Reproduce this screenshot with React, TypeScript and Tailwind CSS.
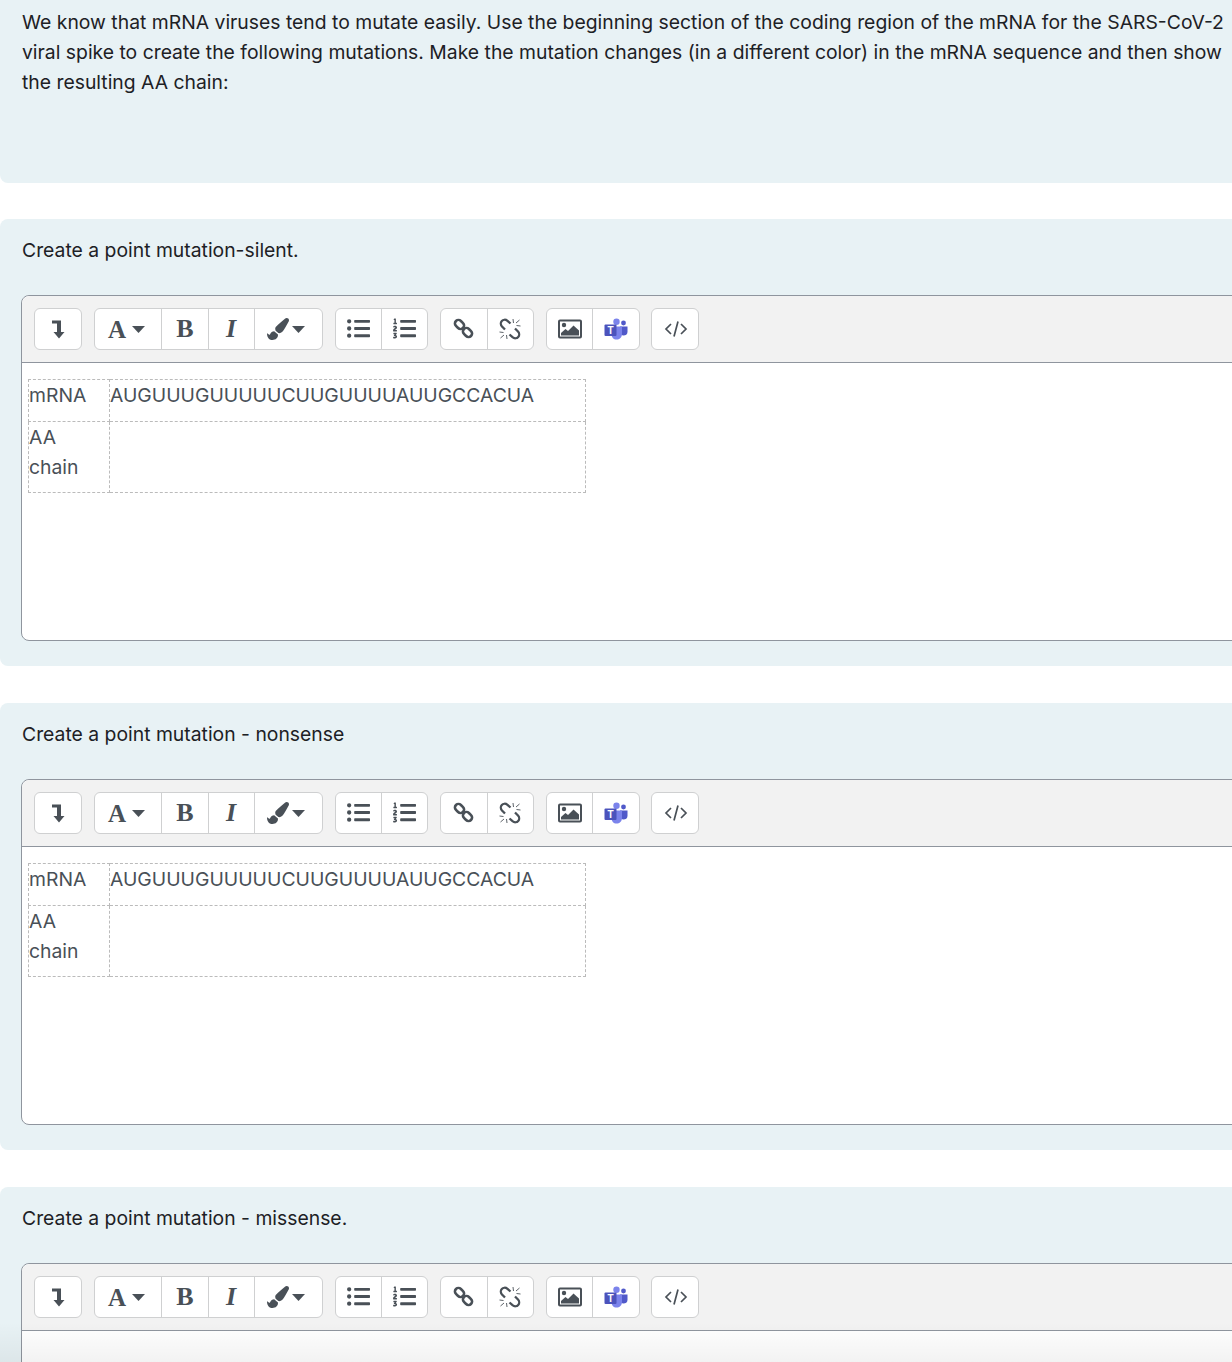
import { FaListOl, FaListUl, FaPaintBrush } from 'react-icons/fa';

const SEQUENCE = 'AUGUUUGUUUUUCUUGUUUUAUUGCCACUA';

function Btn({ width, last, children }: { width: string; last?: boolean; children: React.ReactNode }) {
  return (
    <div className={`${width} h-full flex items-center justify-center text-[#495057] ${last ? '' : 'border-r border-[#cfd0d1]'}`}>
      {children}
    </div>
  );
}

function Group({ children }: { children: React.ReactNode }) {
  return <div className="flex h-[42px] bg-white border border-[#cfd0d1] rounded-[6px]">{children}</div>;
}

function Caret() {
  return (
    <svg width="13" height="7" viewBox="0 0 13 7" className="shrink-0">
      <path d="M0 0 H13 L6.5 7 Z" fill="#495057" />
    </svg>
  );
}

function LevelDownIcon() {
  return (
    <svg width="14" height="19" viewBox="0 0 14 19">
      <path d="M1 0.5 H10 V12 H13.5 L8 18.5 L2.5 12 H6 V3.5 H1 Z" fill="#495057" />
    </svg>
  );
}

function LinkIcon() {
  return (
    <svg width="22" height="22" viewBox="0 0 22 22" fill="none" stroke="#495057" strokeWidth="2.6">
      <rect x="1.5" y="3" width="10" height="7" rx="3.5" transform="rotate(45 6.5 6.5)" />
      <rect x="9.5" y="11" width="10" height="7" rx="3.5" transform="rotate(45 14.5 14.5)" />
    </svg>
  );
}

function UnlinkIcon() {
  return (
    <svg width="22" height="22" viewBox="0 0 22 22" fill="none" stroke="#495057">
      <path d="M11.5 5.5 L8.5 2.8 C6.5 1.2 4 1.6 2.8 3 C1.4 4.5 1.6 7 3 8.5 L6 11.5" strokeWidth="2.3" />
      <path d="M10.5 16.5 L13.5 19.2 C15.5 20.8 18 20.4 19.2 19 C20.6 17.5 20.4 15 19 13.5 L16 10.5" strokeWidth="2.3" />
      <path d="M14 1 L14.5 5 M20.5 2 L17 5 M21.5 8 L17.5 7.5 M0.5 14 L4.5 14.5 M1.5 20 L5 17 M8 21 L7.5 17" strokeWidth="0.9" />
    </svg>
  );
}

function ImageIcon() {
  return (
    <svg width="24" height="20" viewBox="0 0 24 20">
      <rect x="1" y="1.5" width="22" height="17" rx="1" fill="#fff" stroke="#495057" strokeWidth="2" />
      <circle cx="6" cy="6" r="2.2" fill="#495057" />
      <path d="M3 16.5 L3 14 L7.5 10 L10 12 L15.5 6.5 L21 11.5 L21 16.5 Z" fill="#495057" />
    </svg>
  );
}

function TeamsIcon() {
  return (
    <svg width="24" height="22" viewBox="0 0 24 22">
      <circle cx="19.5" cy="5" r="2.4" fill="#5059c9" />
      <path d="M16 8.5 H23.5 V14 C23.5 16.5 21.5 17.5 19.5 17.5 C17.5 17.5 16 16 16 14 Z" fill="#5059c9" />
      <circle cx="12.5" cy="3.8" r="3.2" fill="#7b83eb" />
      <path d="M7.5 8.5 H18 V16 C18 19.5 15.5 21.5 12.5 21.5 C9.5 21.5 7.5 19.5 7.5 16 Z" fill="#7b83eb" />
      <rect x="0.5" y="6.5" width="12" height="11.5" rx="1" fill="#4b53bc" />
      <text x="6.5" y="16" textAnchor="middle" fontSize="10" fontWeight="700" fill="#fff" fontFamily="Liberation Sans, sans-serif">T</text>
    </svg>
  );
}

function Toolbar() {
  return (
    <div className="flex gap-3 pl-3 py-3 h-[67px] bg-[#f2f2f2] border-b border-[#8f959e] rounded-t-[8px]">
      <Group>
        <Btn width="w-[46px]" last><LevelDownIcon /></Btn>
      </Group>
      <Group>
        <Btn width="w-[67px]">
          <span className="font-['Liberation_Serif',serif] font-bold text-[25px] leading-none mr-[6px] -ml-[3px]">A</span>
          <Caret />
        </Btn>
        <Btn width="w-[47px]"><span className="font-['Liberation_Serif',serif] font-bold text-[26px] leading-none">B</span></Btn>
        <Btn width="w-[46px]"><span className="font-['Liberation_Serif',serif] font-bold italic text-[26px] leading-none -ml-px">I</span></Btn>
        <Btn width="w-[67px]" last>
          <FaPaintBrush size={22} className="mr-[3px] -ml-[5px]" />
          <Caret />
        </Btn>
      </Group>
      <Group>
        <Btn width="w-[46px]"><FaListUl size={23} className="-mt-px -ml-px" /></Btn>
        <Btn width="w-[45px]" last><FaListOl size={23} className="-mt-px" /></Btn>
      </Group>
      <Group>
        <Btn width="w-[47px]"><LinkIcon /></Btn>
        <Btn width="w-[45px]" last><div className="-ml-px"><UnlinkIcon /></div></Btn>
      </Group>
      <Group>
        <Btn width="w-[46px]"><ImageIcon /></Btn>
        <Btn width="w-[46px]" last><TeamsIcon /></Btn>
      </Group>
      <div className="-ml-px">
        <Group>
          <Btn width="w-[46px]" last>
            <svg width="24" height="18" viewBox="0 0 24 18" fill="none" stroke="#495057" strokeWidth="1.7" className="ml-px">
              <path d="M7 4 L2 9 L7 14 M17 4 L22 9 L17 14 M14 1.5 L10 16.5" />
            </svg>
          </Btn>
        </Group>
      </div>
    </div>
  );
}

function SequenceTable() {
  return (
    <table className="table-fixed border-collapse w-[558px]">
      <tbody>
        <tr>
          <td className="w-[81px] border border-dashed border-[#bbbbbb] pb-[11px] align-top">mRNA</td>
          <td className="border border-dashed border-[#bbbbbb] pb-[11px] align-top">{SEQUENCE}</td>
        </tr>
        <tr>
          <td className="border border-dashed border-[#bbbbbb] pb-[10px] align-top">AA<br />chain</td>
          <td className="border border-dashed border-[#bbbbbb]"></td>
        </tr>
      </tbody>
    </table>
  );
}

function Editor({ empty }: { empty?: boolean }) {
  return (
    <div className="w-[1300px] h-[346px] bg-white border border-[#8f959e] rounded-[8px]">
      <Toolbar />
      <div className="pt-4 pl-[6px] text-[#495057]">{!empty && <SequenceTable />}</div>
    </div>
  );
}

function Question({ title, empty }: { title: string; empty?: boolean }) {
  return (
    <section className="bg-[#e8f2f5] rounded-l-[8px] pl-[21px] pt-4 pb-[25px] h-[447px] mb-[37px]">
      <p className="h-[30px] mb-[30px] pl-px">{title}</p>
      <Editor empty={empty} />
    </section>
  );
}

export default function App() {
  return (
    <div className="relative w-[1232px] h-[1362px] overflow-hidden bg-white text-[19.35px] leading-[30px] text-[#1d2125] font-['Inter','Noto_Sans',sans-serif]">
      <section className="bg-[#e8f2f5] rounded-bl-[8px] pl-[22px] pt-[7px] h-[183px] mb-[36px]">
        <p className="w-[1205px]">
          We know that mRNA viruses tend to mutate easily. Use the beginning section of the coding region of the mRNA for the SARS-CoV-2 viral spike to create the following mutations. Make the mutation changes (in a different color) in the mRNA sequence and then show the resulting AA chain:
        </p>
      </section>
      <Question title="Create a point mutation-silent." />
      <Question title="Create a point mutation - nonsense" />
      <Question title="Create a point mutation - missense." empty />
      <div className="absolute left-0 right-0 bottom-0 h-[40px] bg-gradient-to-b from-transparent to-black/5 pointer-events-none" />
    </div>
  );
}
